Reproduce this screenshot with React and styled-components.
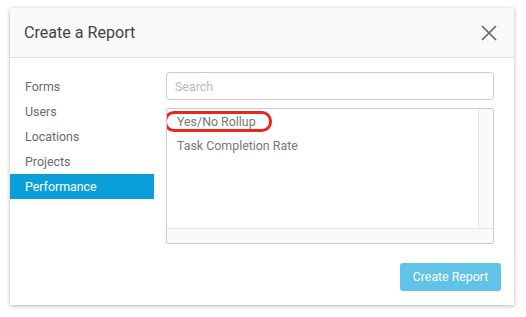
import React from "react";
import styled, { createGlobalStyle } from "styled-components";

const GlobalStyle = createGlobalStyle`
  html, body {
    margin: 0;
    padding: 0;
    background: #ffffff;
    font-family: Roboto, "Liberation Sans", sans-serif;
  }
`;

const navItems = ["Forms", "Users", "Locations", "Projects", "Performance"];
const reports = ["Yes/No Rollup", "Task Completion Rate"];

const NavItem = ({ label, active }) => <NavLink $active={active}>{label}</NavLink>;

function App() {
  return (
    <Page>
      <GlobalStyle />
      <Modal>
        <Header>
          <Title>Create a Report</Title>
          <Close aria-label="close">
            <svg width="16" height="16" viewBox="0 0 16 16">
              <path d="M1 1 L15 15 M15 1 L1 15" stroke="#666" strokeWidth="1.7" fill="none" />
            </svg>
          </Close>
        </Header>
        <Body>
          <Nav>
            {navItems.map((n) => (
              <NavItem key={n} label={n} active={n === "Performance"} />
            ))}
          </Nav>
          <Main>
            <Search placeholder="Search" />
            <ListBox>
              <ListInner>
                {reports.map((r, i) => (
                  <ListRow key={r} $marked={i === 0}>
                    {r}
                  </ListRow>
                ))}
              </ListInner>
              <VScroll />
              <HScroll />
            </ListBox>
          </Main>
        </Body>
        <Footer>
          <Button>Create Report</Button>
        </Footer>
      </Modal>
    </Page>
  );
}

const Page = styled.div`
  width: 526px;
  height: 317px;
  padding: 8px 12px 0 10px;
  box-sizing: border-box;
  overflow: hidden;
`;

const Modal = styled.div`
  width: 504px;
  height: 297px;
  background: #fff;
  box-shadow: 0 1px 4px rgba(0, 0, 0, 0.3);
  display: flex;
  flex-direction: column;
`;

const Header = styled.div`
  height: 50px;
  background: #f9f9f9;
  border-bottom: 1px solid #e2e2e2;
  display: flex;
  align-items: center;
  justify-content: space-between;
  padding: 0 17px 0 14px;
  box-sizing: border-box;
`;

const Title = styled.h1`
  margin: 0;
  font-size: 16.1px;
  font-weight: 400;
  color: #444;
`;

const Close = styled.div`
  width: 16px;
  height: 16px;
  display: flex;
`;

const Body = styled.div`
  display: flex;
  gap: 12px;
  padding: 14px 20px 0 0;
`;

const Nav = styled.div`
  width: 144px;
  display: flex;
  flex-direction: column;
  padding-top: 2px;
`;

const NavLink = styled.div`
  height: 25px;
  line-height: 25px;
  padding-left: 15px;
  font-size: 12.4px;
  color: ${(p) => (p.$active ? "#fff" : "#6a6a6a")};
  background: ${(p) => (p.$active ? "#0a9fd8" : "transparent")};
`;

const Main = styled.div`
  flex: 1;
  display: flex;
  flex-direction: column;
  gap: 8px;
`;

const Search = styled.input`
  height: 28px;
  box-sizing: border-box;
  border: 1px solid #ccc;
  border-radius: 4px;
  padding: 0 8px;
  font-family: Roboto, "Liberation Sans", sans-serif;
  font-size: 12.4px;
  outline: none;
  &::placeholder {
    color: #bbb;
  }
`;

const ListBox = styled.div`
  position: relative;
  height: 136px;
  box-sizing: border-box;
  border: 1px solid #ccc;
  border-radius: 2px;
  overflow: hidden;
`;

const ListInner = styled.div`
  padding: 1px 0 0 10px;
`;

const ListRow = styled.div`
  position: relative;
  height: 23.5px;
  line-height: 23.5px;
  font-size: 12.4px;
  color: #777;
  ${(p) =>
    p.$marked &&
    `
    &::after {
      content: "";
      position: absolute;
      left: -13px;
      top: 1px;
      width: 108px;
      height: 21px;
      border: 3px solid #e9271c;
      border-radius: 10px;
      box-sizing: border-box;
    }
  `}
`;

const VScroll = styled.div`
  position: absolute;
  top: 0;
  right: 0;
  width: 14px;
  bottom: 14px;
  background: #fafafa;
  border-left: 1px solid #e6e6e6;
`;

const HScroll = styled.div`
  position: absolute;
  left: 0;
  right: 0;
  bottom: 0;
  height: 14px;
  background: #fafafa;
  border-top: 1px solid #e6e6e6;
`;

const Footer = styled.div`
  margin-top: auto;
  display: flex;
  justify-content: flex-end;
  padding: 0 13px 14px 0;
`;

const Button = styled.button`
  height: 28px;
  width: 101px;
  padding: 0;
  border: none;
  border-radius: 3px;
  background: #62c3e8;
  color: #fff;
  font-family: Roboto, "Liberation Sans", sans-serif;
  font-size: 12.3px;
`;

export default App;
